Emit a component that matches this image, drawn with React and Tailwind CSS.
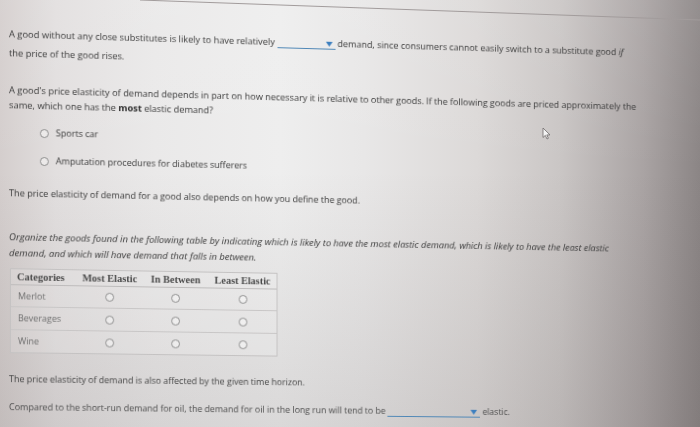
import React from 'react';

// Photo of a homework page: price elasticity questions

const Dropdown = ({ w }) => (
  <span className={`relative inline-block h-[10px] ${w} border-b border-[#4f87b6] align-[-3px]`}>
    <svg className="absolute right-[3px] bottom-[2px]" width="7" height="5" viewBox="0 0 7 5">
      <path d="M0 0 L7 0 L3.5 5 Z" fill="#3c7fbf" />
    </svg>
  </span>
);

const Radio = () => (
  <span className="inline-block h-[9px] w-[9px] shrink-0 rounded-full border border-[#8c8c8c] bg-white/40" />
);

const rows = [
  { name: 'Merlot', h: 'h-[22px]' },
  { name: 'Beverages', h: 'h-[23px]' },
  { name: 'Wine', h: 'h-[22px]' },
];

export default function App() {
  return (
    <div className="relative h-[427px] w-[700px] overflow-hidden bg-[linear-gradient(90deg,#d4cecd_0%,#e2dfdf_8%,#eae9e9_22%,#eeeeee_40%,#e8e7e7_52%,#dcd9d8_68%,#cac6c5_80%,#a9a3a3_92%,#8b8585_100%)] font-['Open_Sans',sans-serif] text-[9.4px] text-[#3a3a3a]">
      {/* light falloff towards the bottom of the screen */}
      <div className="absolute inset-0 bg-[linear-gradient(180deg,rgba(255,255,255,0.08)_0%,rgba(255,255,255,0)_40%,rgba(70,60,60,0.12)_100%)]" />

      {/* screen edge at the top */}
      <svg className="absolute left-0 top-0" width="700" height="24" viewBox="0 0 700 24">
        <line x1="140" y1="0" x2="700" y2="20" stroke="#a29c9c" strokeWidth="1" />
      </svg>

      <div className="relative pl-[9px] pt-[27px] blur-[0.3px] [transform:perspective(1000px)_rotateY(3deg)] [transform-origin:0_600px]">
        {/* question 1 */}
        <div className="whitespace-nowrap leading-[14px]">
          A good without any close substitutes is likely to have relatively <Dropdown w="w-[60px]" /> demand, since consumers cannot easily switch to a substitute good <i>if</i>
        </div>
        <div className="mt-[5px] whitespace-nowrap leading-[14px]">the price of the good rises.</div>

        {/* question 2 */}
        <div className="mt-[22px] whitespace-nowrap leading-[15px]">
          <div>A good's price elasticity of demand depends in part on how necessary it is relative to other goods. If the following goods are priced approximately the</div>
          <div>same, which one has the <b className="font-bold text-[#2a2a2a]">most</b> elastic demand?</div>
        </div>

        <div className="ml-[31px] mt-[13px] flex h-[14px] items-center gap-[7px] whitespace-nowrap text-[9.1px]">
          <Radio />
          <span>Sports car</span>
        </div>
        <div className="ml-[31px] mt-[14px] flex h-[14px] items-center gap-[7px] whitespace-nowrap text-[9.1px]">
          <Radio />
          <span>Amputation procedures for diabetes sufferers</span>
        </div>

        {/* question 3 */}
        <div className="mt-[19px] whitespace-nowrap text-[9.2px] leading-[14px]">
          The price elasticity of demand for a good also depends on how you define the good.
        </div>

        <div className="mt-[29px] whitespace-nowrap text-[9.6px] italic leading-[16px]">
          <div>Organize the goods found in the following table by indicating which is likely to have the most elastic demand, which is likely to have the least elastic</div>
          <div>demand, and which will have demand that falls in between.</div>
        </div>

        <div className="ml-[1px] mt-[7px] w-[272px] border border-[#c4c2c2] bg-white/15">
          <div className="flex h-[16px] items-center border-b border-[#bdbbbb] font-['Liberation_Serif',serif] text-[10.5px] font-bold text-[#4a4a4a]">
            <div className="w-[66px] pl-[6px]">Categories</div>
            <div className="w-[67px] text-center">Most Elastic</div>
            <div className="w-[67px] text-center">In Between</div>
            <div className="w-[70px] text-center">Least Elastic</div>
          </div>
          {rows.map((r, i) => (
            <div
              key={r.name}
              className={`flex ${r.h} items-center ${i < rows.length - 1 ? 'border-b border-[#c8c6c6]' : ''}`}
            >
              <div className="w-[66px] pl-[7px] text-[9px] text-[#6e6e6e]">{r.name}</div>
              <div className="flex w-[67px] justify-center"><Radio /></div>
              <div className="flex w-[67px] justify-center"><Radio /></div>
              <div className="flex w-[70px] justify-center"><Radio /></div>
            </div>
          ))}
        </div>

        {/* question 4 */}
        <div className="mt-[19px] whitespace-nowrap text-[9px] leading-[14px] text-[#454545]">
          The price elasticity of demand is also affected by the given time horizon.
        </div>
        <div className="mt-[14px] whitespace-nowrap text-[9px] leading-[14px] text-[#4c4c4c]">
          Compared to the short-run demand for oil, the demand for oil in the long run will tend to be <Dropdown w="w-[97px]" /> elastic.
        </div>
      </div>

      {/* mouse pointer */}
      <svg className="absolute left-[542px] top-[127px]" width="9" height="13" viewBox="0 0 9 13">
        <path d="M1 1 L1 10.5 L3.3 8.4 L5 12 L6.4 11.3 L4.8 7.9 L8 7.9 Z" fill="#f4f4f4" stroke="#6e6a6a" strokeWidth="0.8" strokeLinejoin="round" />
      </svg>
    </div>
  );
}
